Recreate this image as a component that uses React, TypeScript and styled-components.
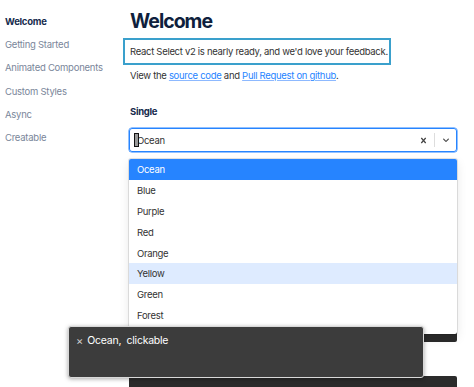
import React from 'react';
import styled, { createGlobalStyle } from 'styled-components';

const GlobalStyle = createGlobalStyle`
    html, body {
        margin: 0;
        padding: 0;
        background: #fff;
        font-family: Inter, 'Noto Sans', sans-serif;
        overflow: hidden;
    }
`;

const Page = styled.div`
    display: flex;
    width: 474px;
    height: 387px;
    overflow: hidden;
    position: relative;
`;

const Sidebar = styled.nav`
    width: 124px;
    padding: 15px 0 0 5px;
    display: flex;
    flex-direction: column;
    gap: 10.2px;
`;

const NavItem = styled.a<{ active?: boolean }>`
    font-size: 9.5px;
    letter-spacing: -0.25px;
    line-height: 13px;
    color: ${(p) => (p.active ? '#172b4d' : '#7a869a')};
    font-weight: ${(p) => (p.active ? 700 : 400)};
    text-decoration: none;
`;

const Main = styled.main`
    width: 328px;
    display: flex;
    flex-direction: column;
    & > * {
        flex-shrink: 0;
    }
`;

const Title = styled.h1`
    margin: 8px 0 0 1px;
    font-size: 19.5px;
    letter-spacing: -1px;
    line-height: 26px;
    font-weight: 700;
    color: #0f1f3d;
`;

const Callout = styled.div`
    margin: 4px 0 0 -6px;
    width: 259px;
    height: 23px;
    border: 2px solid #3aa0cc;
    display: flex;
    align-items: center;
    padding-left: 5px;
    font-size: 9.5px;
    letter-spacing: -0.3px;
    white-space: nowrap;
    color: #333;
`;

const Paragraph = styled.p`
    margin: 4px 0 0 1px;
    font-size: 9.5px;
    letter-spacing: -0.3px;
    line-height: 14px;
    color: #333;
`;

const Link = styled.a`
    color: #2684ff;
    text-decoration: underline;
    text-decoration-color: #8db9ff;
`;

const Label = styled.h4`
    margin: 22px 0 0 1px;
    font-size: 9.5px;
    letter-spacing: -0.3px;
    line-height: 14px;
    font-weight: 700;
    color: #172b4d;
`;

const SelectWrap = styled.div`
    position: relative;
    margin-top: 9px;
`;

const Control = styled.div`
    height: 22px;
    border: 1px solid #2684ff;
    box-shadow: 0 0 0 0.5px #2684ff;
    border-radius: 3px;
    display: flex;
    align-items: center;
    padding-left: 4px;
`;

const Value = styled.div`
    flex: 1;
    font-size: 9.5px;
    letter-spacing: -0.3px;
    color: #333;
    display: flex;
    align-items: center;
`;

const Caret = styled.span`
    display: inline-block;
    width: 3px;
    height: 12px;
    border: 1px solid #111;
    background: #999;
    margin-right: -2px;
    position: relative;
    z-index: 1;
`;

const Indicators = styled.div`
    display: flex;
    align-items: center;
    height: 100%;
`;

const IndicatorButton = styled.div`
    width: 21px;
    display: flex;
    align-items: center;
    justify-content: center;
    color: #444;
`;

const Separator = styled.span`
    width: 1px;
    height: 14px;
    background: #ddd;
`;

const Menu = styled.div`
    position: absolute;
    top: 31px;
    left: 0;
    right: 0;
    height: 175px;
    overflow: hidden;
    background: #fff;
    border-radius: 2px;
    box-shadow: 0 0 0 1px rgba(0, 0, 0, 0.1), 0 4px 11px rgba(0, 0, 0, 0.1);
    z-index: 2;
`;

const Option = styled.div<{ state?: 'selected' | 'focused' }>`
    height: 20.9px;
    display: flex;
    align-items: center;
    padding-left: 8px;
    font-size: 9.5px;
    letter-spacing: -0.3px;
    background: ${(p) =>
        p.state === 'selected' ? '#2684ff' : p.state === 'focused' ? '#deebff' : '#fff'};
    color: ${(p) => (p.state === 'selected' ? '#fff' : '#333')};
`;

const CodeBlock = styled.div<{ h: number }>`
    height: ${(p) => p.h}px;
    background: #2b2b2b;
    border-radius: 2px;
`;

const Spacer = styled.div<{ h: number }>`
    height: ${(p) => p.h}px;
`;

const Caption = styled.div`
    position: absolute;
    left: 68px;
    top: 326px;
    width: 356px;
    height: 52px;
    background: #3c3c3c;
    border: 1px solid #d8d8d8;
    border-radius: 3px;
    box-shadow: 0 1px 4px rgba(0, 0, 0, 0.35);
    z-index: 5;
    color: #fff;
    padding: 7px 0 0 7px;
    box-sizing: border-box;
    display: flex;
    align-items: flex-start;
    gap: 4px;
`;

const CaptionClose = styled.span`
    color: #cfcfcf;
    font-size: 11px;
    line-height: 14px;
`;

const CaptionText = styled.span`
    font-size: 10.5px;
    letter-spacing: -0.25px;
    line-height: 14px;
    white-space: pre;
`;

const navItems = ['Welcome', 'Getting Started', 'Animated Components', 'Custom Styles', 'Async', 'Creatable'];
const colours = ['Ocean', 'Blue', 'Purple', 'Red', 'Orange', 'Yellow', 'Green', 'Forest'];

const App = (): JSX.Element => {
    return (
        <>
            <GlobalStyle />
            <Page>
                <Sidebar>
                    {navItems.map((item, i) => (
                        <NavItem key={item} href="#" active={i === 0}>
                            {item}
                        </NavItem>
                    ))}
                </Sidebar>
                <Main>
                    <Title>Welcome</Title>
                    <Callout>React Select v2 is nearly ready, and we'd love your feedback.</Callout>
                    <Paragraph>
                        View the <Link href="#">source code</Link> and{' '}
                        <Link href="#">Pull Request on github</Link>.
                    </Paragraph>
                    <Label>Single</Label>
                    <SelectWrap>
                        <Control>
                            <Value>
                                <Caret />
                                Ocean
                            </Value>
                            <Indicators>
                                <IndicatorButton>
                                    <svg width="11" height="11" viewBox="0 0 20 20" fill="currentColor">
                                        <path d="M14.348 14.849c-0.469 0.469-1.229 0.469-1.697 0l-2.651-3.030-2.651 3.029c-0.469 0.469-1.229 0.469-1.697 0-0.469-0.469-0.469-1.229 0-1.697l2.758-3.15-2.759-3.152c-0.469-0.469-0.469-1.228 0-1.697s1.228-0.469 1.697 0l2.652 3.031 2.651-3.031c0.469-0.469 1.228-0.469 1.697 0s0.469 1.229 0 1.697l-2.758 3.152 2.758 3.15c0.469 0.469 0.469 1.229 0 1.698z" />
                                    </svg>
                                </IndicatorButton>
                                <Separator />
                                <IndicatorButton>
                                    <svg width="10" height="10" viewBox="0 0 20 20" fill="currentColor">
                                        <path d="M4.516 7.548c0.436-0.446 1.043-0.481 1.576 0l3.908 3.747 3.908-3.747c0.533-0.481 1.141-0.446 1.574 0 0.436 0.445 0.408 1.197 0 1.615-0.406 0.418-4.695 4.502-4.695 4.502-0.217 0.223-0.502 0.335-0.787 0.335s-0.57-0.112-0.789-0.335c0 0-4.287-4.084-4.695-4.502s-0.436-1.17 0-1.615z" />
                                    </svg>
                                </IndicatorButton>
                            </Indicators>
                        </Control>
                        <Menu>
                            {colours.map((c) => (
                                <Option
                                    key={c}
                                    state={c === 'Ocean' ? 'selected' : c === 'Yellow' ? 'focused' : undefined}
                                >
                                    {c}
                                </Option>
                            ))}
                        </Menu>
                    </SelectWrap>
                    <Spacer h={20} />
                    <CodeBlock h={170} />
                    <Spacer h={34} />
                    <CodeBlock h={40} />
                </Main>
                <Caption>
                    <CaptionClose>×</CaptionClose>
                    <CaptionText>Ocean,  clickable</CaptionText>
                </Caption>
            </Page>
        </>
    );
};

export default App;
